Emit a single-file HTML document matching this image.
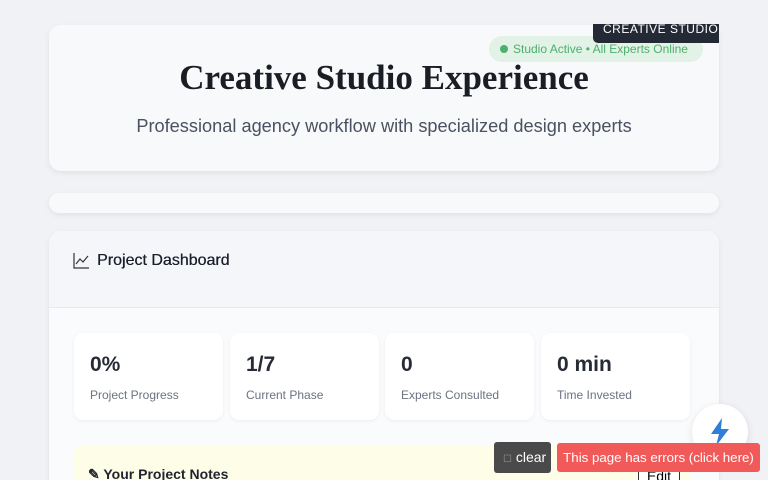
<!DOCTYPE html>
<html style="overflow:hidden;height:480px"><head><meta charset="utf-8"><style>
*{box-sizing:border-box;margin:0;padding:0}
body{width:768px;height:480px;overflow:hidden;background:#f1f2f6;font-family:"Liberation Sans",sans-serif;position:relative}
.card{position:absolute;left:49px;width:670px;background:#f8f9fa;border-radius:12px;box-shadow:0 2px 6px rgba(0,0,0,.07)}
h1{font-family:"Liberation Serif",serif;font-size:35px;font-weight:bold;color:#1a1d24;text-align:center;position:absolute;top:33px;width:100%}
.sub{position:absolute;top:91px;width:100%;text-align:center;font-size:18.2px;color:#4a5160}
.badge{position:absolute;left:489px;top:36px;width:214px;height:26px;border-radius:13px;background:#e2f2e6;color:#4caf6d;font-size:12px;line-height:26px;padding-left:24px}
.badge:before{content:"";position:absolute;left:11px;top:9px;width:8px;height:8px;border-radius:50%;background:#4caf6d}
.tag{position:absolute;left:593px;top:24px;width:126px;height:19px;background:#232a36;color:#fff;font-size:12px;letter-spacing:.5px;padding-left:10px;line-height:11px;border-radius:0 0 0 5px;overflow:hidden;white-space:nowrap}
.stat{position:absolute;top:333px;width:149px;height:87px;background:#fff;border-radius:9px;box-shadow:0 1px 3px rgba(0,0,0,.06);padding:20px 16px}
.stat b{display:block;font-size:21px;color:#262b36}
.stat span{display:block;font-size:12px;color:#6b7280;margin-top:11px}
</style></head><body>
<div class="card" style="top:25px;height:146px"><h1>Creative Studio Experience</h1><div class="sub">Professional agency workflow with specialized design experts</div></div>
<div class="badge">Studio Active • All Experts Online</div>
<div class="tag">CREATIVE STUDIO</div>
<div class="card" style="top:193px;height:20px"></div>
<div class="card" style="top:231px;height:260px;background:#fafbfc">
<div style="height:77px;background:#f4f6fa;border-bottom:1px solid #e8eaee;border-radius:12px 12px 0 0"></div>
</div>
<svg style="position:absolute;left:73px;top:252px" width="17" height="17" viewBox="0 0 17 17" fill="none" stroke="#333" stroke-width="1.2"><path d="M1 1V16H16"/><path d="M3 12L7 7L10 10L15 4"/></svg>
<div style="position:absolute;left:97px;top:252px;font-size:16px;color:#1a1f2a;text-shadow:0.3px 0 0 #1a1f2a">Project Dashboard</div>
<div class="stat" style="left:74px"><b>0%</b><span>Project Progress</span></div>
<div class="stat" style="left:230px"><b>1/7</b><span>Current Phase</span></div>
<div class="stat" style="left:385px"><b>0</b><span>Experts Consulted</span></div>
<div class="stat" style="left:541px"><b>0 min</b><span>Time Invested</span></div>
<div style="position:absolute;left:74px;top:446px;width:616px;height:40px;background:#fefde8;border-radius:8px 8px 0 0"></div>
<div style="position:absolute;left:88px;top:466px;font-size:14px;font-weight:bold;color:#1f2430">✎ Your Project Notes</div>
<div style="position:absolute;left:638px;top:463px;width:42px;height:24px;border:1px solid #333;font-size:14px;text-align:center;line-height:24px;background:#fff">Edit</div>
<div style="position:absolute;left:692px;top:404px;width:56px;height:56px;border-radius:50%;background:#fff;box-shadow:0 2px 8px rgba(0,0,0,.1)"></div>
<svg style="position:absolute;left:709px;top:418px" width="22" height="28" viewBox="0 0 22 28"><path d="M13 0L2 16H10L7 28L20 11H12Z" fill="#2f7fd8"/></svg>
<div style="position:absolute;left:494px;top:442px;width:57px;height:31px;background:#4a4a4a;border-radius:3px;color:#fff;font-size:14px;line-height:31px;padding-left:9px"><span style="font-size:10px;color:#999">☐</span> clear</div>
<div style="position:absolute;left:557px;top:443px;width:203px;height:29px;background:#f25a5a;border-radius:3px;color:#fff;font-size:13.3px;line-height:29px;text-align:center">This page has errors (click here)</div>
</body></html>
